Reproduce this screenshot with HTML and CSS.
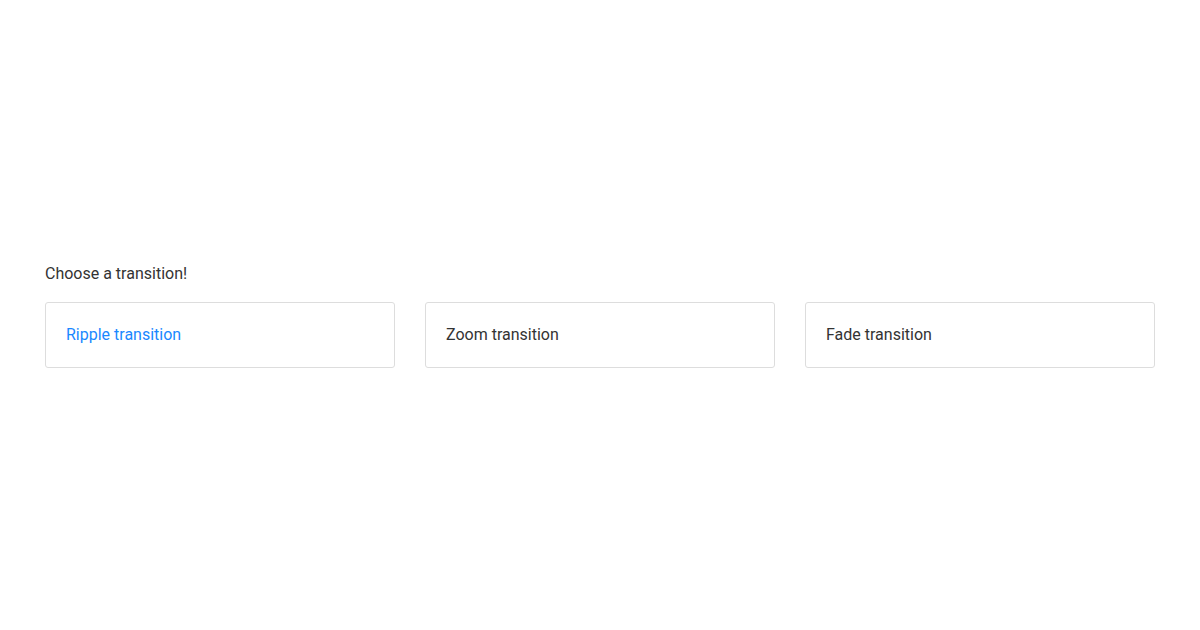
FILE: index.html
```html
<!DOCTYPE html>
<html>
<head>
<meta charset="utf-8">
<link rel="stylesheet" href="styles.css">
</head>
<body>
<main class="page">
  <div class="wrap">
    <p class="label">Choose a transition!</p>
    <div class="cards">
      <div class="card active">Ripple transition</div>
      <div class="card">Zoom transition</div>
      <div class="card">Fade transition</div>
    </div>
  </div>
</main>
</body>
</html>
```

FILE: styles.css
```css
html, body {
  margin: 0;
  padding: 0;
  background: #fff;
}
body {
  font-family: Roboto, "Liberation Sans", sans-serif;
  font-size: 16px;
  color: #333;
}
.page {
  height: 630px;
  display: flex;
  align-items: center;
  justify-content: center;
}
.wrap {
  width: 1110px;
}
.label {
  margin: 0 0 16px;
  line-height: 24px;
}
.cards {
  display: grid;
  grid-template-columns: repeat(3, 1fr);
  gap: 30px;
}
.card {
  border: 1px solid #ddd;
  border-radius: 3px;
  height: 64px;
  padding: 0 20px;
  display: flex;
  align-items: center;
  line-height: 24px;
}
.card.active {
  color: #1a88ff;
}
```
